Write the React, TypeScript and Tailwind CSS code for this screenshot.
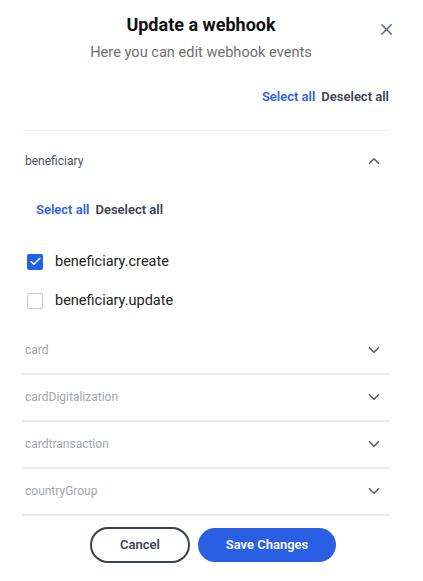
import { Check, ChevronDown, ChevronUp, X } from 'lucide-react';

const groups = ['card', 'cardDigitalization', 'cardtransaction', 'countryGroup'];

function SelectLinks({ className }: { className?: string }) {
  return (
    <div className={`flex items-center gap-[6px] text-[13px] font-semibold ${className ?? ''}`}>
      <button className="text-[#2f62e0]">Select all</button>
      <button className="text-[#3b4456]">Deselect all</button>
    </div>
  );
}

export default function App() {
  return (
    <div className="min-h-screen bg-white font-['Roboto',sans-serif] relative">
      <button className="absolute left-[377px] top-[20px] text-[#5d6776]">
        <X className="w-[19px] h-[19px]" strokeWidth={1.8} />
      </button>

      <div className="pl-[22px] w-[390px]">
        <div className="flex flex-col items-center pt-[13px] pr-[10px]">
          <h1 className="text-[18px] font-bold text-[#111] leading-[24px]">Update a webhook</h1>
          <p className="text-[14.6px] text-[#6f6f6f] leading-[20px] mt-[5px]">Here you can edit webhook events</p>
        </div>

        <div className="flex justify-end mt-[25px] pr-[1px]">
          <SelectLinks />
        </div>

        <div className="border-t border-[#f1f1f3] mt-[23px]">
          <div className="flex items-center justify-between h-[60px] pl-[3px] pr-[7px]">
            <span className="text-[12px] text-[#4b5262]">beneficiary</span>
            <ChevronUp className="w-[18px] h-[18px] text-[#5a5f69]" strokeWidth={2.2} />
          </div>

          <SelectLinks className="pl-[14px] mt-[9px]" />

          <div className="flex flex-col gap-[17px] mt-[32px] pl-[5px]">
            <label className="flex items-center gap-[12px]">
              <span className="w-[16px] h-[16px] rounded-[2px] bg-[#1f63e8] flex items-center justify-center">
                <Check className="w-[13px] h-[13px] text-white" strokeWidth={3} />
              </span>
              <span className="text-[14.5px] text-[#222]">beneficiary.create</span>
            </label>
            <label className="flex items-center gap-[12px]">
              <span className="w-[16px] h-[16px] rounded-[2px] border-[1.5px] border-[#c8c8c8] bg-white" />
              <span className="text-[14.5px] text-[#222]">beneficiary.update</span>
            </label>
          </div>

          <div className="mt-[16px]">
            {groups.map((g) => (
              <div key={g} className="flex items-center justify-between h-[47px] pl-[3px] pr-[7px] border-b-2 border-[#ececee]">
                <span className="text-[12px] text-[#a2a6ad]">{g}</span>
                <ChevronDown className="w-[18px] h-[18px] text-[#5a5f69]" strokeWidth={2.2} />
              </div>
            ))}
          </div>
        </div>

        <div className="flex justify-center gap-[8px] mt-[11px] pl-[14px]">
          <button className="w-[100px] h-[36px] rounded-full border-2 border-[#3a4252] text-[13px] font-semibold text-[#3a4252]">
            Cancel
          </button>
          <button className="w-[138px] h-[34px] mt-[1px] rounded-full bg-[#2a5fe4] text-[13px] font-semibold text-white">
            Save Changes
          </button>
        </div>
      </div>
    </div>
  );
}
